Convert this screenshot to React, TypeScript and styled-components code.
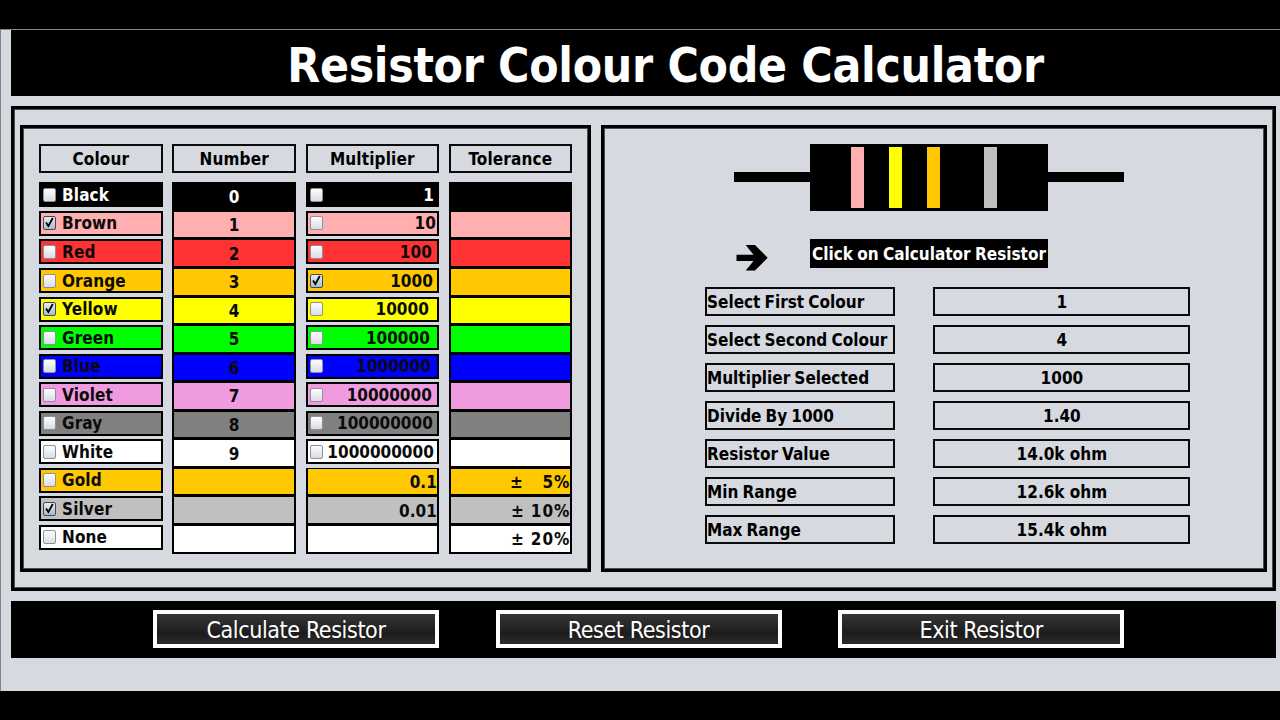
import React from "react";
import styled, { createGlobalStyle } from "styled-components";

const GlobalStyle = createGlobalStyle`
  * { box-sizing: border-box; }
  body {
    margin: 0;
    background: #000;
    font-family: "DejaVu Sans Condensed", "DejaVu Sans", Tahoma, sans-serif;
    font-stretch: condensed;
  }
`;

const Screen = styled.div`
  width: 1280px;
  height: 720px;
  padding: 29px 0;
  background: #000;
  overflow: hidden;
`;

const Window = styled.main`
  height: 662px;
  border-top: 1px solid #85878a;
  border-left: 1px solid #808289;
  padding-left: 10px;
  background: #d6d9df;
`;

const TitleBar = styled.header`
  height: 66px;
  background: #000;
  display: flex;
  justify-content: center;
  padding-left: 40px;
`;

const Title = styled.h1`
  margin: 0;
  color: #fff;
  font-size: 47.6px;
  line-height: 72px;
  font-weight: bold;
  letter-spacing: -0.3px;
  white-space: nowrap;
`;

const Frame = styled.section`
  width: 1265px;
  height: 485px;
  margin-top: 10px;
  border: 3px solid #000;
  box-shadow: inset 0 0 0 1px #4c4d50;
  padding: 16px 6px 0;
  display: flex;
  gap: 10px;
`;

const Panel = styled.div<{ $width: number }>`
  width: ${(p) => p.$width}px;
  height: 447px;
  border: 3px solid #000;
  box-shadow: inset 0 0 0 1px #4c4d50;
`;

const TablePanel = styled(Panel)`
  display: flex;
  gap: 9.8px;
  padding: 16px 0 0 16px;
`;

const Column = styled.div<{ $width: number }>`
  width: ${(p) => p.$width}px;
  display: flex;
  flex-direction: column;
`;

const Heading = styled.div`
  height: 29px;
  margin-bottom: 9.4px;
  border: 2px solid #0a0a0b;
  display: flex;
  align-items: center;
  justify-content: center;
  padding-top: 1px;
  font-size: 17px;
  font-weight: bold;
  letter-spacing: 0.15px;
`;

const Option = styled.label<{ $color: string; $dark?: boolean }>`
  height: 25px;
  margin-bottom: 3.56px;
  border: 2px solid #000;
  background: ${(p) => p.$color};
  color: ${(p) => (p.$dark ? "#fff" : "#0a0a0a")};
  display: flex;
  align-items: center;
  padding-left: 2px;
  font-size: 17px;
  font-weight: bold;
  white-space: nowrap;
`;

const OptionText = styled.span`
  margin-left: 6px;
  letter-spacing: 0.12px;
`;

const MultiplierText = styled.span<{ $inset: number }>`
  margin-left: auto;
  margin-right: ${(p) => p.$inset}px;
`;

const Cell = styled.div<{ $color: string; $dark?: boolean; $right?: boolean }>`
  height: 28.56px;
  border: solid #000;
  border-width: 1px 2px 2px;
  background: ${(p) => p.$color};
  color: ${(p) => (p.$dark ? "#fff" : "#0a0a0a")};
  display: flex;
  align-items: center;
  justify-content: ${(p) => (p.$right ? "flex-end" : "center")};
  padding-top: 1px;
  font-size: 17px;
  font-weight: bold;
  white-space: pre;
`;

const Tolerance = styled.span`
  letter-spacing: 0.9px;
`;

const Box = styled.span<{ $on: boolean }>`
  width: 13px;
  height: 14px;
  flex: none;
  border: 1px solid ${(p) => (p.$on ? "#3f4a58" : "#8e9196")};
  border-radius: 2px;
  background: ${(p) =>
    p.$on
      ? "linear-gradient(#e4ebf2, #a9bccd)"
      : "linear-gradient(#fdfdfe, #dadce4)"};
  display: flex;
  align-items: center;
  justify-content: center;
`;

const Check = ({ on }: { on: boolean }) => (
  <Box $on={on}>
    {on && (
      <svg width="11" height="12" viewBox="0 0 11 12">
        <path d="M2 5.4 L4.4 9 L8.8 1" fill="none" stroke="#000" strokeWidth="1.8" />
      </svg>
    )}
  </Box>
);

const ResultPanel = styled(Panel)`
  display: flex;
  flex-direction: column;
  padding: 16px 0 0 101px;
`;

const Resistor = styled.div`
  margin-left: 29px;
  display: flex;
  align-items: flex-start;
`;

const Lead = styled.div`
  width: 76px;
  height: 10px;
  margin-top: 28px;
  background: #000;
`;

const Body = styled.div`
  width: 238px;
  height: 67px;
  background: #000;
  display: flex;
  padding: 3px 0 0 41px;
  gap: 25px;
`;

const Band = styled.div<{ $color: string; $gap?: number }>`
  width: 13px;
  height: 61px;
  margin-left: ${(p) => p.$gap ?? 0}px;
  background: ${(p) => p.$color};
`;

const HintRow = styled.div`
  height: 48px;
  margin-top: 28px;
  padding-left: 31px;
  display: flex;
  align-items: flex-start;
`;

const Arrow = styled.svg`
  width: 32px;
  height: 26px;
  margin: 6px 42px 0 0;
`;

const Hint = styled.div`
  width: 238px;
  height: 29px;
  background: #000;
  color: #fff;
  display: flex;
  align-items: center;
  justify-content: center;
  padding-top: 1px;
  font-size: 17px;
  font-weight: bold;
  word-spacing: -1px;
  white-space: nowrap;
`;

const Results = styled.div`
  display: grid;
  grid-template-columns: 190px 257px;
  column-gap: 38.4px;
  grid-auto-rows: 29px;
  row-gap: 9.05px;
`;

const Field = styled.div`
  border: 2px solid #0a0a0b;
  display: flex;
  align-items: center;
  padding-top: 1px;
  font-size: 17px;
  font-weight: bold;
  word-spacing: -1.2px;
  white-space: nowrap;
`;

const Value = styled(Field)`
  justify-content: center;
  word-spacing: 0;
`;

const ActionBar = styled.footer`
  width: 1265px;
  height: 57px;
  margin-top: 10px;
  padding: 9px 0 0 142px;
  background: #000;
  display: flex;
  gap: 56.6px;
`;

const Action = styled.button`
  width: 286px;
  height: 38px;
  padding: 2px 0 0;
  border: 4px solid #fff;
  background: linear-gradient(#363636, #1c1c1c 65%, #2c2c2c);
  color: #fff;
  font-family: inherit;
  font-stretch: inherit;
  font-size: 23px;
  letter-spacing: -0.38px;
  line-height: 28px;
`;

interface Row {
  name: string;
  color: string;
  digit?: string;
  multiplier: string;
  inset?: number;
  tolerance?: string;
  dark?: boolean;
}

const rows: Row[] = [
  { name: "Black", color: "#000000", digit: "0", multiplier: "1", inset: 3, dark: true },
  { name: "Brown", color: "#ffafaf", digit: "1", multiplier: "10", inset: 1 },
  { name: "Red", color: "#ff3333", digit: "2", multiplier: "100", inset: 5 },
  { name: "Orange", color: "#ffc800", digit: "3", multiplier: "1000", inset: 4 },
  { name: "Yellow", color: "#ffff00", digit: "4", multiplier: "10000", inset: 8 },
  { name: "Green", color: "#00ff00", digit: "5", multiplier: "100000", inset: 7 },
  { name: "Blue", color: "#0000ff", digit: "6", multiplier: "1000000", inset: 6 },
  { name: "Violet", color: "#f09bdf", digit: "7", multiplier: "10000000", inset: 5 },
  { name: "Gray", color: "#808080", digit: "8", multiplier: "100000000", inset: 4 },
  { name: "White", color: "#ffffff", digit: "9", multiplier: "1000000000", inset: 3 },
  { name: "Gold", color: "#ffc800", multiplier: "0.1", tolerance: "±   5%" },
  { name: "Silver", color: "#c0c0c0", multiplier: "0.01", tolerance: "± 10%" },
  { name: "None", color: "#ffffff", multiplier: "", tolerance: "± 20%" },
];

const selected = ["Brown", "Yellow", "Silver"];

const results = [
  ["Select First Colour", "1"],
  ["Select Second Colour", "4"],
  ["Multiplier Selected", "1000"],
  ["Divide By 1000", "1.40"],
  ["Resistor Value", "14.0k ohm"],
  ["Min Range", "12.6k ohm"],
  ["Max Range", "15.4k ohm"],
];

export default function App() {
  return (
    <Screen>
      <GlobalStyle />
      <Window>
        <TitleBar>
          <Title>Resistor Colour Code Calculator</Title>
        </TitleBar>
        <Frame>
          <TablePanel $width={571}>
            <Column $width={123.6}>
              <Heading>Colour</Heading>
              {rows.map((r) => (
                <Option key={r.name} $color={r.color} $dark={r.dark}>
                  <Check on={selected.includes(r.name)} />
                  <OptionText>{r.name}</OptionText>
                </Option>
              ))}
            </Column>
            <Column $width={123.6}>
              <Heading>Number</Heading>
              {rows.map((r) => (
                <Cell key={r.name} $color={r.color} $dark={r.dark}>
                  {r.digit}
                </Cell>
              ))}
            </Column>
            <Column $width={133}>
              <Heading>Multiplier</Heading>
              {rows.map((r) =>
                r.digit ? (
                  <Option key={r.name} $color={r.color} $dark={r.dark}>
                    <Check on={r.multiplier === "1000"} />
                    <MultiplierText $inset={r.inset ?? 0}>{r.multiplier}</MultiplierText>
                  </Option>
                ) : (
                  <Cell key={r.name} $color={r.color} $right>
                    {r.multiplier}
                  </Cell>
                )
              )}
            </Column>
            <Column $width={123.6}>
              <Heading>Tolerance</Heading>
              {rows.map((r) => (
                <Cell key={r.name} $color={r.color} $right>
                  {r.tolerance && <Tolerance>{r.tolerance}</Tolerance>}
                </Cell>
              ))}
            </Column>
          </TablePanel>
          <ResultPanel $width={666}>
            <Resistor>
              <Lead />
              <Body>
                <Band $color="#ffafaf" />
                <Band $color="#ffff00" />
                <Band $color="#ffc800" />
                <Band $color="#c0c0c0" $gap={19} />
              </Body>
              <Lead />
            </Resistor>
            <HintRow>
              <Arrow viewBox="0 0 32 26">
                <path d="M0.5 9.7H17.5L9.7 0H19L31.7 12.8L19 25.5H9.7L17.5 16H0.5Z" fill="#000" />
              </Arrow>
              <Hint>Click on Calculator Resistor</Hint>
            </HintRow>
            <Results>
              {results.map(([label, value]) => (
                <React.Fragment key={label}>
                  <Field>{label}</Field>
                  <Value>{value}</Value>
                </React.Fragment>
              ))}
            </Results>
          </ResultPanel>
        </Frame>
        <ActionBar>
          <Action>Calculate Resistor</Action>
          <Action>Reset Resistor</Action>
          <Action>Exit Resistor</Action>
        </ActionBar>
      </Window>
    </Screen>
  );
}
